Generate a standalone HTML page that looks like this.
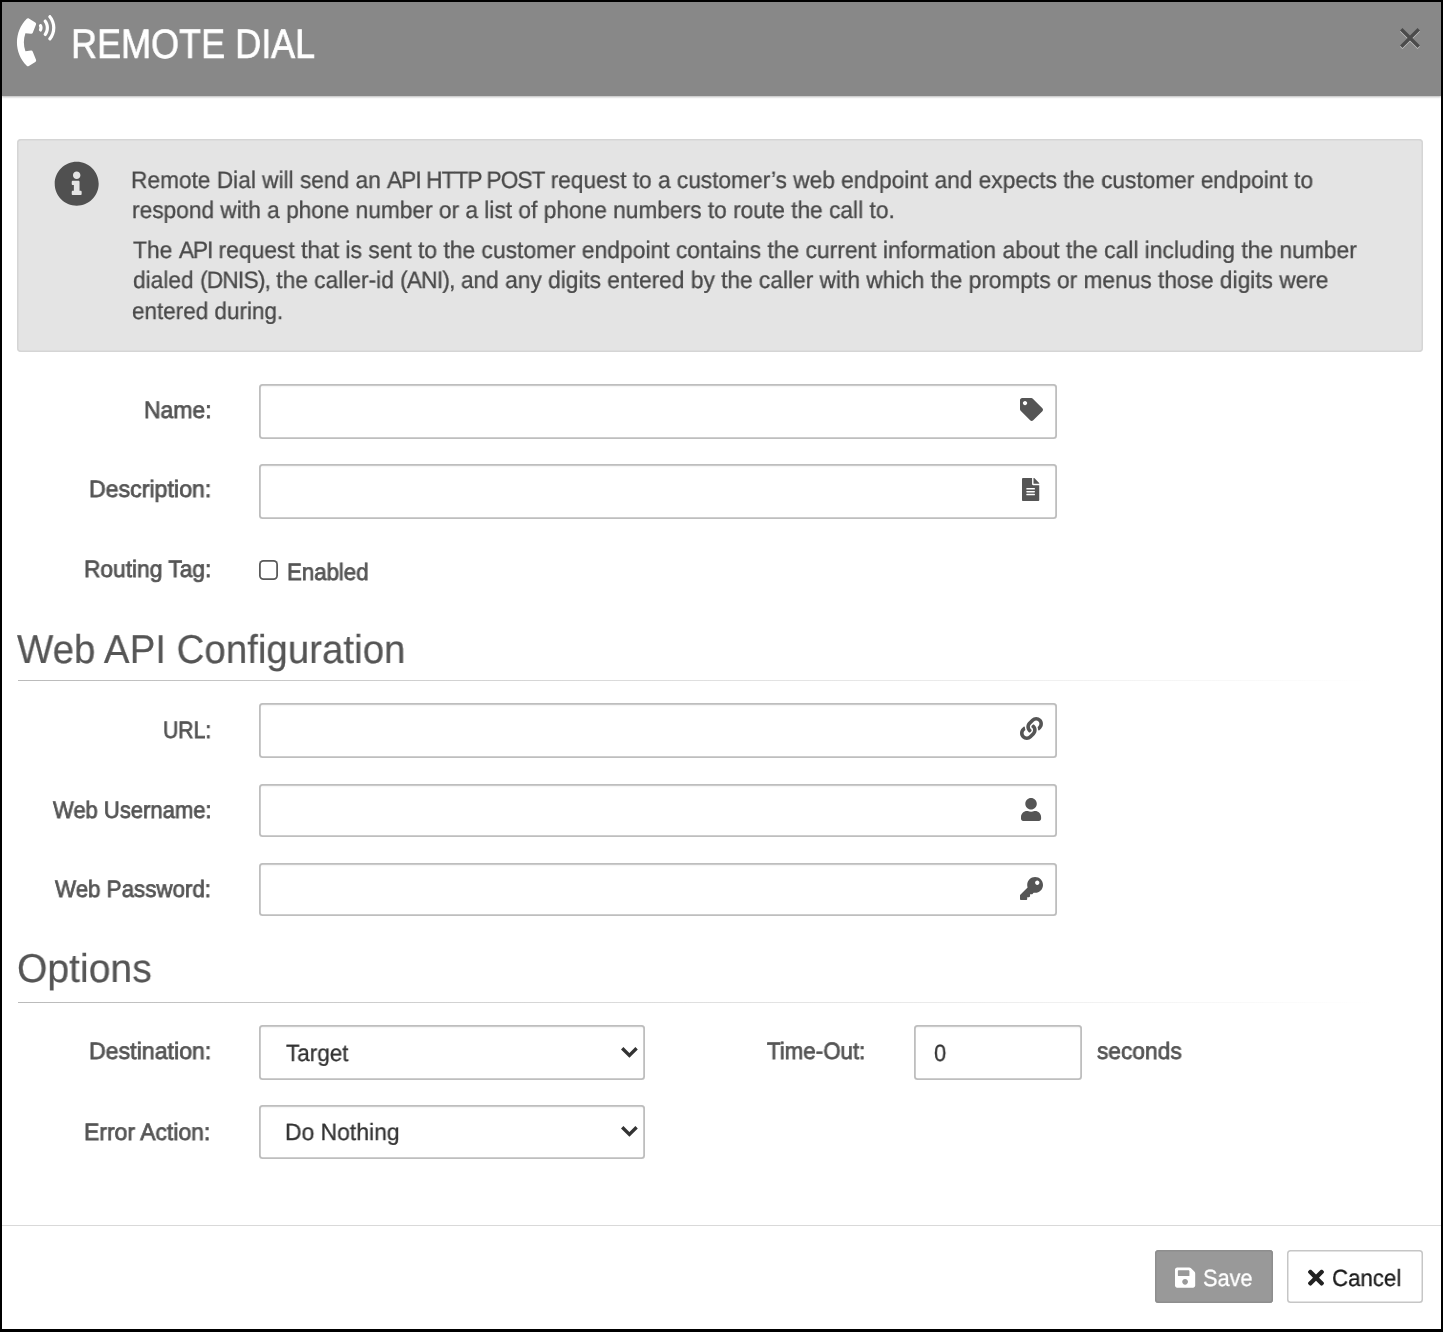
<!DOCTYPE html>
<html lang="en">
<head>
<meta charset="utf-8">
<title>Remote Dial</title>
<style>
html,body{margin:0;padding:0;}
p{margin:0;}
input.inp{display:block;margin:0;padding:0;border:0;outline:0;-webkit-appearance:none;appearance:none;box-sizing:border-box;font:inherit;}
body{width:1443px;height:1332px;background:#000;position:relative;overflow:hidden;
  font-family:"Liberation Sans",sans-serif;color:#555;text-rendering:geometricPrecision;}
#dlg{position:absolute;left:2px;top:2px;width:1439px;height:1327px;background:#fff;overflow:hidden;}
.abs{display:block;margin:0;font-weight:normal;position:absolute;white-space:nowrap;transform-origin:0 50%;will-change:transform;}
#hdr{position:absolute;left:0;top:0;width:1439px;height:93.6px;background:#888;box-shadow:0 0.5px 2px rgba(0,0,0,.28);}
#info{position:absolute;left:15.3px;top:137.4px;width:1405.8px;height:212.2px;background:#e4e4e4;border-radius:4px;box-shadow:inset 0 0 0 1.5px #d5d5d5;}
.inp{position:absolute;background:#fff;border-radius:3.5px;box-shadow:inset 0 0 0 1.8px #bebebe, inset 0 2.5px 2px rgba(0,0,0,.07);}
.hr{position:absolute;left:15.5px;width:1404px;height:1px;background:linear-gradient(to right,rgba(0,0,0,.27) 0%,rgba(0,0,0,.12) 50%,rgba(0,0,0,.0) 97%);}
.ico{position:absolute;fill:#555;overflow:visible;}
.btn{position:absolute;border-radius:3.5px;}
.t-title{color:#fff;-webkit-text-stroke:0.7px #fff;}
.t-p{color:#494949;-webkit-text-stroke:0.3px #494949;}
.t-l{color:#555;-webkit-text-stroke:0.75px #555;}
.t-h{color:#555;-webkit-text-stroke:0.2px #555;}
.t-v{color:#333;-webkit-text-stroke:0.3px #333;}
.t-save{color:#fff;-webkit-text-stroke:0.3px #fff;}
.t-cancel{color:#1c1c1c;-webkit-text-stroke:0.3px #1c1c1c;}
</style>
</head>
<body>
<div id="dlg">
  <header id="hdr"></header>
  <svg class="ico" style="left:14.7px;top:12.9px;fill:#fff" width="38.4" height="51.2" viewBox="0 0 384 512"><path d="M97.333 506.966c-129.874-129.874-129.681-340.252 0-469.933 5.698-5.698 14.527-6.632 21.263-2.422l64.817 40.513a17.187 17.187 0 0 1 6.849 20.958l-32.408 81.021a17.188 17.188 0 0 1-17.669 10.719l-55.810-5.580c-21.051 58.261-20.612 122.471 0 179.515l55.811-5.581a17.188 17.188 0 0 1 17.669 10.719l32.408 81.022a17.188 17.188 0 0 1-6.849 20.958l-64.817 40.513a17.190 17.190 0 0 1-21.264-2.422zM247.126 95.473c11.832 20.047 11.832 45.008 0 65.055-3.950 6.693-13.108 7.959-18.718 2.581l-5.975-5.726c-3.911-3.748-4.793-9.622-2.261-14.410a32.063 32.063 0 0 0 0-29.945c-2.533-4.788-1.650-10.662 2.261-14.410l5.975-5.726c5.610-5.378 14.768-4.112 18.718 2.581zm91.787-91.187c60.140 71.604 60.092 175.882 0 247.428-4.474 5.327-12.530 5.746-17.552.933l-5.798-5.557c-4.560-4.371-4.977-11.529-.930-16.379 49.687-59.538 49.646-145.933 0-205.422-4.047-4.850-3.631-12.008.930-16.379l5.798-5.557c5.022-4.813 13.078-4.394 17.552.933zm-45.972 44.941c36.050 46.322 36.108 111.149 0 157.546-4.390 5.641-12.697 6.251-17.856 1.304l-5.818-5.579c-4.400-4.219-4.998-11.095-1.285-15.931 26.536-34.564 26.534-82.572 0-117.134-3.713-4.836-3.115-11.711 1.285-15.931l5.818-5.579c5.159-4.947 13.466-4.337 17.856 1.304z"/></svg>
  <svg class="ico" style="left:1397.8px;top:25.9px" width="20" height="21.2" viewBox="0 0 20 21.2"><path d="M2.45 1.00 L10.00 8.55 L17.55 1.00 L20.00 3.45 L12.45 11.00 L20.00 18.55 L17.55 21.00 L10.00 13.45 L2.45 21.00 L0.00 18.55 L7.55 11.00 L0.00 3.45 Z" fill="rgba(255,255,255,.5)"/><path d="M2.45 0.00 L10.00 7.55 L17.55 0.00 L20.00 2.45 L12.45 10.00 L20.00 17.55 L17.55 20.00 L10.00 12.45 L2.45 20.00 L0.00 17.55 L7.55 10.00 L0.00 2.45 Z" fill="#4b4b4b"/></svg>

  <div id="info"></div>
  <svg class="ico" style="left:51.6px;top:158.9px;fill:#505050" width="45.4" height="45.4" viewBox="0 0 512 512"><path d="M256 8C119.043 8 8 119.083 8 256c0 136.997 111.043 248 248 248s248-111.003 248-248C504 119.083 392.957 8 256 8zm0 110c23.196 0 42 18.804 42 42s-18.804 42-42 42-42-18.804-42-42 18.804-42 42-42zm56 254c0 6.627-5.373 12-12 12h-88c-6.627 0-12-5.373-12-12v-24c0-6.627 5.373-12 12-12h12v-64h-12c-6.627 0-12-5.373-12-12v-24c0-6.627 5.373-12 12-12h64c6.627 0 12 5.373 12 12v100h12c6.627 0 12 5.373 12 12v24z"/></svg>

  <input type="text" class="inp" style="left:256.5px;top:382.2px;width:798.7px;height:55px">
  <svg class="ico" style="left:1017.5px;top:396px" width="23" height="23" viewBox="0 0 512 512"><path d="M0 252.118V48C0 21.490 21.490 0 48 0h204.118a48 48 0 0 1 33.941 14.059l211.882 211.882c18.745 18.745 18.745 49.137 0 67.882L293.823 497.941c-18.745 18.745-49.137 18.745-67.882 0L14.059 286.059A48 48 0 0 1 0 252.118zM112 64c-26.510 0-48 21.490-48 48s21.490 48 48 48 48-21.490 48-48-21.490-48-48-48z"/></svg>
  <input type="text" class="inp" style="left:256.5px;top:461.8px;width:798.7px;height:54.9px">
  <svg class="ico" style="left:1020.3px;top:475.6px" width="17.25" height="23" viewBox="0 0 384 512"><path d="M224 136V0H24C10.700 0 0 10.700 0 24v464c0 13.300 10.700 24 24 24h336c13.300 0 24-10.700 24-24V160H248c-13.200 0-24-10.800-24-24zm64 236c0 6.600-5.400 12-12 12H108c-6.600 0-12-5.400-12-12v-8c0-6.600 5.400-12 12-12h168c6.600 0 12 5.400 12 12v8zm0-64c0 6.600-5.400 12-12 12H108c-6.600 0-12-5.400-12-12v-8c0-6.600 5.400-12 12-12h168c6.600 0 12 5.400 12 12v8zm0-72v8c0 6.600-5.400 12-12 12H108c-6.600 0-12-5.400-12-12v-8c0-6.600 5.400-12 12-12h168c6.600 0 12 5.400 12 12zm96-114.100v6.100H256V0h6.100c6.400 0 12.500 2.500 17 7l97.900 98c4.500 4.500 7 10.600 7 16.900z"/></svg>

  <div style="position:absolute;left:256.6px;top:558.4px;width:19.4px;height:19.8px;border-radius:4.5px;box-shadow:inset 0 0 0 1.8px #5a5a5a;background:#fff"></div>

  <div class="hr" style="top:678px"></div>

  <input type="text" class="inp" style="left:256.5px;top:701.1px;width:798.7px;height:54.7px">
  <svg class="ico" style="left:1017.5px;top:714.5px" width="23" height="23" viewBox="0 0 512 512"><path d="M326.612 185.391c59.747 59.809 58.927 155.698.360 214.590-.110.120-.240.250-.360.370l-67.200 67.200c-59.270 59.270-155.699 59.262-214.960 0-59.270-59.260-59.270-155.700 0-214.960l37.106-37.106c9.840-9.840 26.786-3.300 27.294 10.606.648 17.722 3.826 35.527 9.690 52.721 1.986 5.822.567 12.262-3.783 16.612l-13.087 13.087c-28.026 28.026-28.905 73.660-1.155 101.960 28.024 28.579 74.086 28.749 102.325.510l67.200-67.190c28.191-28.191 28.073-73.757 0-101.830-3.701-3.694-7.429-6.564-10.341-8.569a16.037 16.037 0 0 1-6.947-12.606c-.396-10.567 3.348-21.456 11.698-29.806l21.054-21.055c5.521-5.521 14.182-6.199 20.584-1.731a152.482 152.482 0 0 1 20.522 17.197zM467.547 44.449c-59.261-59.262-155.690-59.270-214.960 0l-67.200 67.200c-.120.120-.250.250-.360.370-58.566 58.892-59.387 154.781.360 214.590a152.454 152.454 0 0 0 20.521 17.196c6.402 4.468 15.064 3.789 20.584-1.731l21.054-21.055c8.350-8.350 12.094-19.239 11.698-29.806a16.037 16.037 0 0 0-6.947-12.606c-2.912-2.005-6.640-4.875-10.341-8.569-28.073-28.073-28.191-73.639 0-101.830l67.200-67.190c28.239-28.239 74.300-28.069 102.325.510 27.750 28.300 26.872 73.934-1.155 101.960l-13.087 13.087c-4.350 4.350-5.769 10.790-3.783 16.612 5.864 17.194 9.042 34.999 9.690 52.721.509 13.906 17.454 20.446 27.294 10.606l37.106-37.106c59.271-59.259 59.271-155.699.001-214.959z"/></svg>
  <input type="text" class="inp" style="left:256.5px;top:782.2px;width:798.7px;height:52.8px">
  <svg class="ico" style="left:1019px;top:795.5px" width="20.1" height="23" viewBox="0 0 448 512"><path d="M224 256c70.700 0 128-57.300 128-128S294.700 0 224 0 96 57.300 96 128s57.300 128 128 128zm89.600 32h-16.700c-22.200 10.200-46.900 16-72.900 16s-50.600-5.800-72.900-16h-16.700C60.200 288 0 348.200 0 422.400V464c0 26.500 21.500 48 48 48h352c26.500 0 48-21.500 48-48v-41.600c0-74.200-60.200-134.400-134.400-134.400z"/></svg>
  <input type="text" class="inp" style="left:256.5px;top:861.4px;width:798.7px;height:52.9px">
  <svg class="ico" style="left:1017.5px;top:875px" width="23" height="23" viewBox="0 0 512 512"><path d="M512 176.001C512 273.203 433.202 352 336 352c-11.220 0-22.190-1.062-32.827-3.069l-24.012 27.014A23.999 23.999 0 0 1 261.223 384H224v40c0 13.255-10.745 24-24 24h-40v40c0 13.255-10.745 24-24 24H24c-13.255 0-24-10.745-24-24v-78.059c0-6.365 2.529-12.470 7.029-16.971l161.802-161.802C163.108 213.814 160 195.271 160 176 160 78.798 238.797.001 335.999 0 433.488-.001 512 78.511 512 176.001zM336 128c0 26.510 21.490 48 48 48s48-21.490 48-48-21.490-48-48-48-48 21.490-48 48z"/></svg>

  <div class="hr" style="top:1000px"></div>

  <div class="inp" style="left:256.5px;top:1023px;width:386.6px;height:55px"></div>
  <svg class="ico" style="left:619.1px;top:1044.9px;fill:none;stroke:#333;stroke-width:3.4" width="16.8" height="10.6" viewBox="0 0 16.8 10.6"><path d="M1.2 1.3 L8.4 8.4 L15.6 1.3"/></svg>
  <div class="inp" style="left:256.5px;top:1103.1px;width:386.6px;height:53.9px"></div>
  <svg class="ico" style="left:619.1px;top:1124.1px;fill:none;stroke:#333;stroke-width:3.4" width="16.8" height="10.6" viewBox="0 0 16.8 10.6"><path d="M1.2 1.3 L8.4 8.4 L15.6 1.3"/></svg>
  <input type="text" class="inp" value="" style="left:911.9px;top:1023px;width:168.5px;height:55px">

  <div style="position:absolute;left:0;top:1222.8px;width:1439px;height:1.5px;background:#d9d9d9"></div>
  <div class="btn" style="left:1153px;top:1248.2px;width:118.1px;height:53.2px;background:#999;box-shadow:inset 0 0 0 1.5px #8e8e8e"></div>
  <svg class="ico" style="left:1172.9px;top:1264.4px;fill:#fff" width="20.2" height="23.1" viewBox="0 0 448 512"><path d="M433.941 129.941l-83.882-83.882A48 48 0 0 0 316.118 32H48C21.490 32 0 53.490 0 80v352c0 26.510 21.490 48 48 48h352c26.510 0 48-21.490 48-48V163.882a48 48 0 0 0-14.059-33.941zM224 416c-35.346 0-64-28.654-64-64 0-35.346 28.654-64 64-64s64 28.654 64 64c0 35.346-28.654 64-64 64zm96-304.520V212c0 6.627-5.373 12-12 12H76c-6.627 0-12-5.373-12-12V108c0-6.627 5.373-12 12-12h228.520c3.183 0 6.235 1.264 8.485 3.515l3.480 3.480A11.996 11.996 0 0 1 320 111.480z"/></svg>
  <div class="btn" style="left:1284.6px;top:1248.2px;width:136.1px;height:53.2px;background:#fff;box-shadow:inset 0 0 0 1.5px #c6c6c6"></div>
  <svg class="ico" style="left:1306px;top:1264px;fill:#222" width="16" height="23.3" viewBox="0 0 352 512"><path d="M242.720 256l100.070-100.070c12.280-12.280 12.280-32.190 0-44.480l-22.240-22.240c-12.280-12.280-32.190-12.280-44.480 0L176 189.280 75.930 89.210c-12.280-12.280-32.190-12.280-44.480 0L9.210 111.450c-12.280 12.280-12.280 32.190 0 44.480L109.280 256 9.210 356.070c-12.280 12.280-12.280 32.190 0 44.480l22.240 22.240c12.280 12.280 32.200 12.280 44.480 0L176 322.720l100.070 100.070c12.280 12.280 32.200 12.280 44.480 0l22.240-22.240c12.280-12.280 12.280-32.190 0-44.480L242.720 256z"/></svg>

  <h1 id="title" class="abs t-title" style="left:68.86px;top:13px;font-size:41.2px;line-height:58px;transform:scaleX(0.8746);">REMOTE DIAL</h1>
  <p>
  <span id="p1" class="abs t-p" style="left:129.48px;top:162px;font-size:23.8px;line-height:33px;transform:scaleX(0.9535);">Remote Dial will send an <span style="letter-spacing:-1.0px">API HTTP POST</span> request to a customer’s web endpoint and expects the customer endpoint to</span>
  <span id="p2" class="abs t-p" style="left:130.37px;top:192px;font-size:23.8px;line-height:33px;transform:scaleX(0.9546);">respond with a phone number or a list of phone numbers to route the call to.</span>
  </p>
  <p>
  <span id="p3" class="abs t-p" style="left:130.54px;top:232px;font-size:23.8px;line-height:33px;transform:scaleX(0.9605);">The <span style="letter-spacing:-1.2px">API</span> request that is sent to the customer endpoint contains the current information about the call including the number</span>
  <span id="p4" class="abs t-p" style="left:130.50px;top:262px;font-size:23.8px;line-height:33px;transform:scaleX(0.9548);">dialed <span style="letter-spacing:-0.85px">(DNIS),</span> the caller-id <span style="letter-spacing:-0.85px">(ANI),</span> and any digits entered by the caller with which the prompts or menus those digits were</span>
  <span id="p5" class="abs t-p" style="left:130.31px;top:293px;font-size:23.8px;line-height:33px;transform:scaleX(0.9445);">entered during.</span>
  </p>
  <label id="name" class="abs t-l" style="left:141.58px;top:393px;font-size:23.7px;line-height:33px;transform:scaleX(0.9678);">Name:</label>
  <label id="desc" class="abs t-l" style="left:87.18px;top:472px;font-size:23.7px;line-height:33px;transform:scaleX(0.9779);">Description:</label>
  <label id="routing" class="abs t-l" style="left:81.82px;top:552px;font-size:23.7px;line-height:33px;transform:scaleX(0.9602);">Routing Tag:</label>
  <span id="enabled" class="abs t-l" style="left:284.59px;top:555px;font-size:23.7px;line-height:33px;transform:scaleX(0.9380);">Enabled</span>
  <h2 id="h2a" class="abs t-h" style="left:15.42px;top:620px;font-size:40.2px;line-height:56px;transform:scaleX(0.9570);">Web API Configuration</h2>
  <label id="url" class="abs t-l" style="left:160.66px;top:713px;font-size:23.7px;line-height:33px;transform:scaleX(0.8924);">URL:</label>
  <label id="webuser" class="abs t-l" style="left:51.12px;top:793px;font-size:23.7px;line-height:33px;transform:scaleX(0.9288);">Web Username:</label>
  <label id="webpass" class="abs t-l" style="left:53.14px;top:872px;font-size:23.7px;line-height:33px;transform:scaleX(0.9426);">Web Password:</label>
  <h2 id="h2b" class="abs t-h" style="left:14.56px;top:939px;font-size:40.2px;line-height:56px;transform:scaleX(0.9726);">Options</h2>
  <label id="dest" class="abs t-l" style="left:87.18px;top:1034px;font-size:23.7px;line-height:33px;transform:scaleX(0.9778);">Destination:</label>
  <span id="target" class="abs t-v" style="left:283.90px;top:1035px;font-size:23.5px;line-height:33px;transform:scaleX(0.9563);">Target</span>
  <label id="erroract" class="abs t-l" style="left:82.18px;top:1115px;font-size:23.7px;line-height:33px;transform:scaleX(0.9690);">Error Action:</label>
  <span id="donothing" class="abs t-v" style="left:282.75px;top:1114px;font-size:23.5px;line-height:33px;transform:scaleX(0.9745);">Do Nothing</span>
  <label id="timeout" class="abs t-l" style="left:764.54px;top:1034px;font-size:23.7px;line-height:33px;transform:scaleX(0.9418);">Time-Out:</label>
  <span id="zero" class="abs t-v" style="left:931.65px;top:1035px;font-size:23.5px;line-height:33px;transform:scaleX(0.9311);">0</span>
  <span id="seconds" class="abs t-l" style="left:1095.23px;top:1034px;font-size:23.7px;line-height:33px;transform:scaleX(0.9598);">seconds</span>
  <span id="save" class="abs t-save" style="left:1200.72px;top:1260px;font-size:23.5px;line-height:33px;transform:scaleX(0.9240);">Save</span>
  <span id="cancel" class="abs t-cancel" style="left:1329.61px;top:1260px;font-size:23.5px;line-height:33px;transform:scaleX(0.9477);">Cancel</span>
</div>
</body>
</html>
